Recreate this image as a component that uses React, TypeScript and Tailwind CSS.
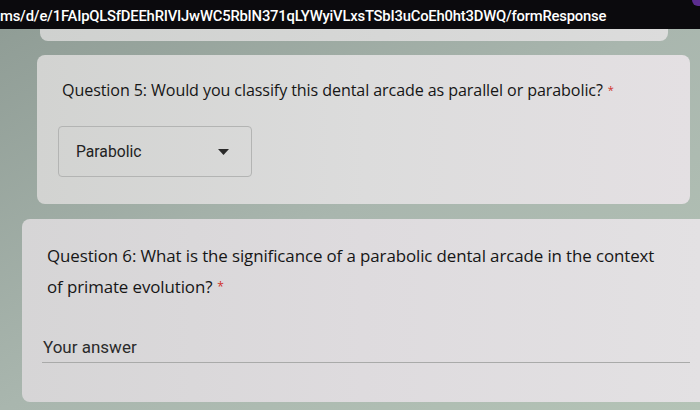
import React from "react";

export default function App() {
  return (
    <div
      className="w-[700px] h-[410px] overflow-hidden relative bg-gradient-to-br from-[#8e9b94] via-[#a9b6ae] to-[#b4c3b6] flex flex-col"
      style={{ fontFamily: "Roboto, 'Liberation Sans', sans-serif" }}
    >
      <div className="h-[29px] shrink-0 bg-[#0b0a0d] flex items-center relative">
        <span className="text-white text-[14.8px] font-medium tracking-[-0.2px] whitespace-nowrap leading-none mt-[4px]">
          ms/d/e/1FAIpQLSfDEEhRIVIJwWC5RbIN371qLYWyiVLxsTSbI3uCoEh0ht3DWQ/formResponse
        </span>
        <div className="absolute right-[-6px] top-[-6px] w-[14px] h-[12px] rounded-full bg-[#5b2d8f]" />
      </div>

      <div className="pl-[40px] pr-[32px]">
        <div className="h-[12px] bg-gradient-to-r from-[#cfd1cf] to-[#dcdcdc] rounded-b-[8px]" />
      </div>

      <div className="pl-[37px] pr-[10px] mt-[14px]">
        <div className="h-[149px] rounded-[8px] bg-gradient-to-r from-[#d2d3d1] via-[#dcdcdc] to-[#e4e0e3] pt-[23px] pl-[25px]">
          <div
            className="text-[16.1px] text-[#161616] leading-[24px] font-normal tracking-[-0.1px]"
            style={{ fontFamily: "'Open Sans', Roboto, sans-serif" }}
          >
            Question 5: Would you classify this dental arcade as parallel or parabolic?
            <span className="text-[#d0302a] text-[11px] ml-[5px] align-top">*</span>
          </div>
          <div className="mt-[24px] ml-[-4px] w-[194px] h-[51px] border border-[#b3b4b3] rounded-[4px] flex items-center pl-[17px] pr-[22px] justify-between">
            <span className="text-[15.7px] text-[#222]">Parabolic</span>
            <svg width="11" height="6" viewBox="0 0 11 6">
              <path d="M0 0 L11 0 L5.5 6 Z" fill="#2a2a2a" />
            </svg>
          </div>
        </div>
      </div>

      <div className="pl-[22px] mt-[15px]">
        <div className="h-[183px] rounded-l-[8px] bg-gradient-to-r from-[#d6d5d6] via-[#dedbde] to-[#e3e1e3] pt-[21px] pl-[25px] pr-[10px]">
          <div
            className="text-[16.9px] text-[#161616] leading-[31px] font-normal tracking-[-0.1px]"
            style={{ fontFamily: "'Open Sans', Roboto, sans-serif" }}
          >
            Question 6: What is the significance of a parabolic dental arcade in the context
            <br />
            of primate evolution?
            <span className="text-[#d0302a] text-[12px] ml-[5px] align-top">*</span>
          </div>
          <div className="mt-[35px] ml-[-4px] text-[17px] text-[#2b2b2b] leading-[20px]">Your answer</div>
          <div className="mt-[5px] ml-[-5px] h-[1px] bg-[#a9aaa9]" />
        </div>
      </div>
    </div>
  );
}
